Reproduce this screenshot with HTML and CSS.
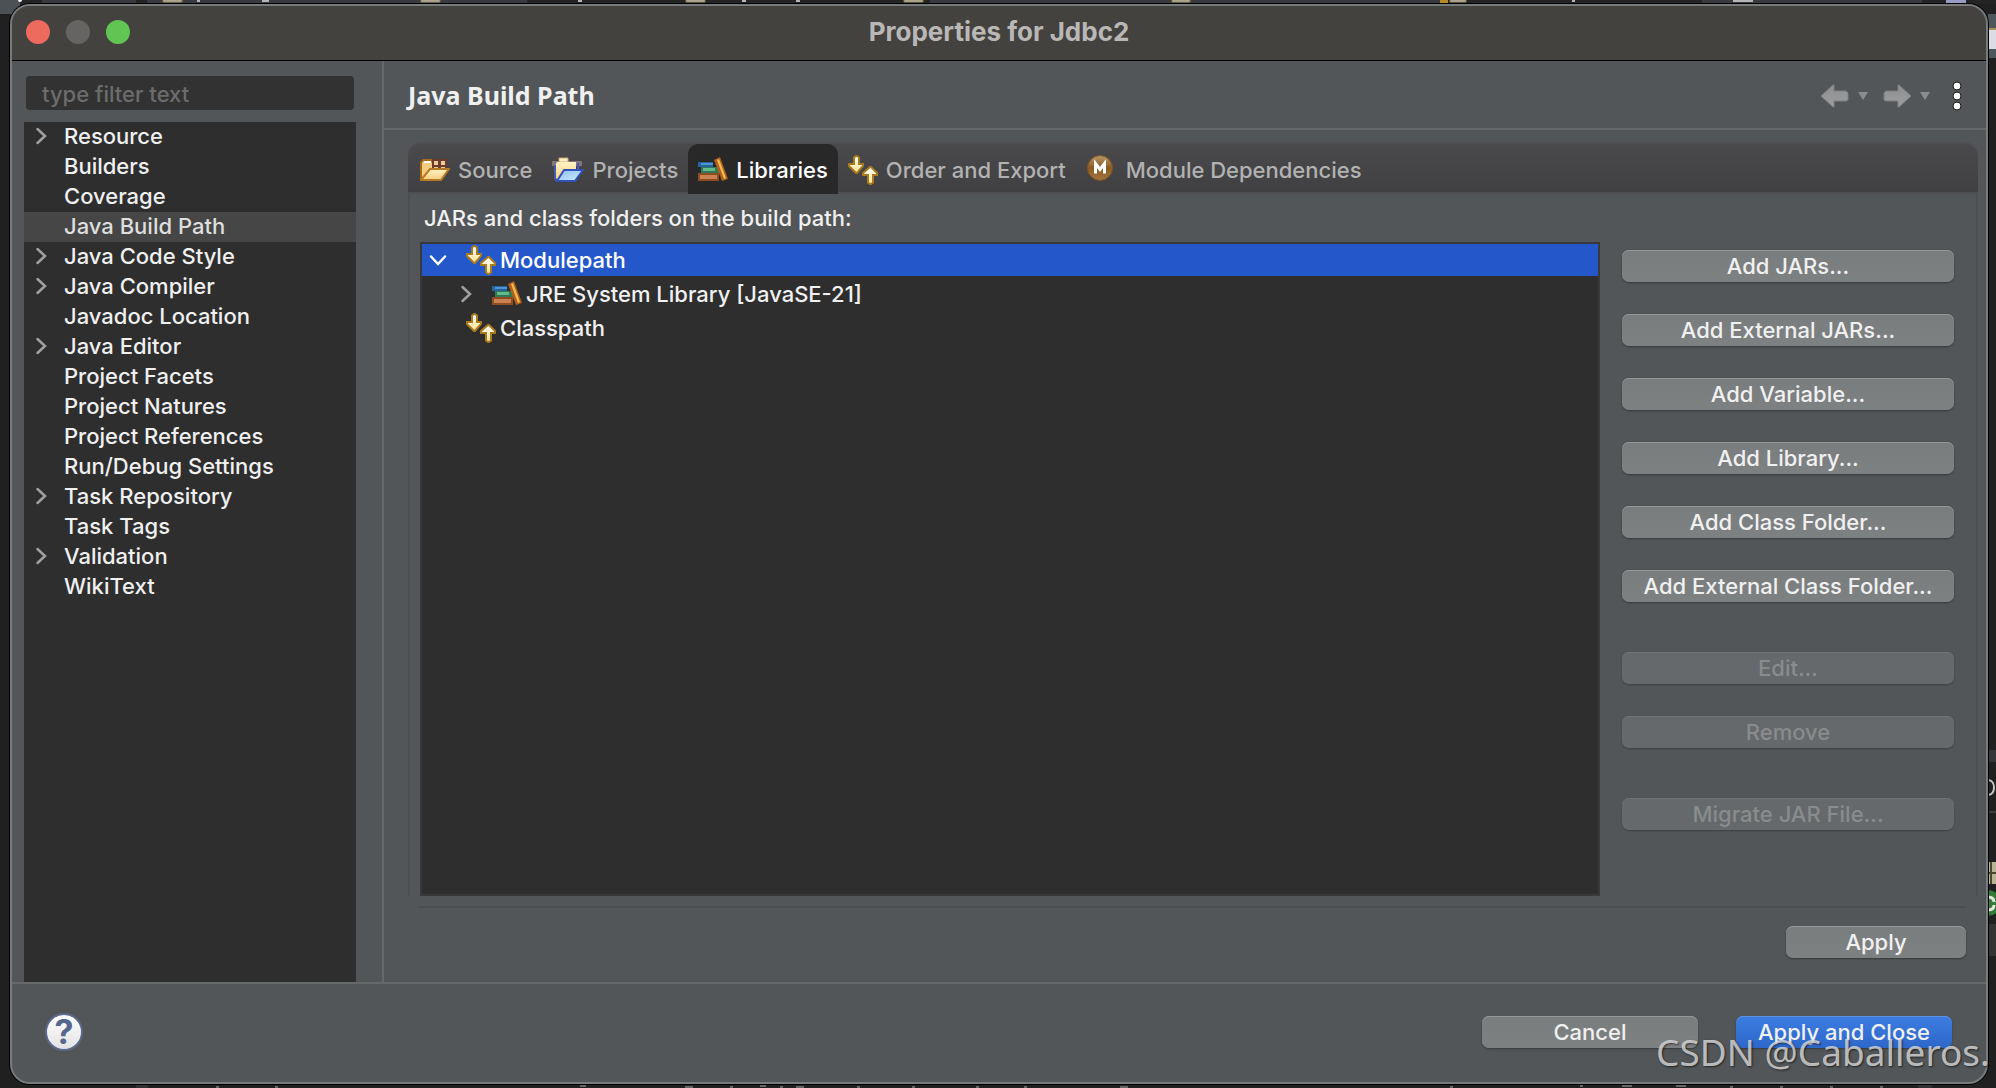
FILE: index.html
```html
<!DOCTYPE html>
<html lang="en">
<head>
<meta charset="utf-8">
<title>Properties for Jdbc2</title>
<link rel="stylesheet" href="styles.css">
</head>
<body>

<!-- shared icons -->
<svg class="defs" width="0" height="0" aria-hidden="true">
  <defs>
    <linearGradient id="gold" x1="0" y1="0" x2="0" y2="1">
      <stop offset="0" stop-color="#fff"/>
      <stop offset="1" stop-color="#fbe08c"/>
    </linearGradient>
    <linearGradient id="paper" x1="0" y1="0" x2="0" y2="1">
      <stop offset="0" stop-color="#fff3c4"/>
      <stop offset="1" stop-color="#f3cd7c"/>
    </linearGradient>
    <linearGradient id="sky" x1="0" y1="0" x2="1" y2="1">
      <stop offset="0" stop-color="#8fc0f5"/>
      <stop offset="1" stop-color="#cdeafd"/>
    </linearGradient>
    <linearGradient id="bronze" x1="0" y1="0" x2="0" y2="1">
      <stop offset="0" stop-color="#b9976b"/>
      <stop offset=".5" stop-color="#8a5a20"/>
      <stop offset="1" stop-color="#a37544"/>
    </linearGradient>
    <linearGradient id="grey" x1="0" y1="0" x2="0" y2="1">
      <stop offset="0" stop-color="#8c8e90"/>
      <stop offset="1" stop-color="#9c9ea0"/>
    </linearGradient>
    <symbol id="path" viewBox="0 0 30 30">
      <path d="M6 2.500 8 1h1l2 1.500V9h4v2L9 18H8L1 11V9h5z" fill="url(#gold)" stroke="#a87a20" stroke-width="2"/>
      <path d="M20 27.500 22 29h1l2-1.500V20h4v-2l-6-6h-1l-7 6v2h5z" fill="url(#gold)" stroke="#a87a20" stroke-width="2"/>
    </symbol>
    <symbol id="books" viewBox="0 0 30 26">
      <path d="M0 5h15v5H0z" fill="#28639f"/><path d="M3 6h12v2H3z" fill="#4a97d4"/>
      <path d="M3 10h18v6H3z" fill="#2e7a57"/><path d="M5 11h12v3H5z" fill="#65b98a"/>
      <path d="M0 16h21v8H0z" fill="#8f4c20"/><path d="M2 18h17v4H2z" fill="#cb8150"/>
      <path d="m16 3 6-3 8 22-6 2z" fill="#b45f1c"/><path d="m19 3 2-1 7 19-2 1z" fill="#f0bd4e"/>
    </symbol>
    <symbol id="source" viewBox="0 0 30 24">
      <path d="M1 22V5l2-3h8l2 3h8v8" fill="#f0cd83" stroke="#a8691c" stroke-width="2"/>
      <path d="M4 3h7v2H4z" fill="#fff"/>
      <path d="M12 1h15v13H12z" fill="#6b3a28"/>
      <path d="M14 3h4v4h-4zM21 3h4v4h-4zM14 9h4v4h-4zM21 9h4v4h-4z" fill="#e9cda0"/>
      <path d="M1 22 10 11h19l-8 11z" fill="url(#paper)" stroke="#b77a24" stroke-width="2"/>
    </symbol>
    <symbol id="projects" viewBox="0 0 32 26">
      <path d="M0 4h30v5H0z" fill="#84747b"/>
      <path d="M7 1h9v4H7z" fill="#fff1c6" stroke="#cfa763" stroke-width="1"/>
      <path d="M3 9v14l3 1L24 13V5H5z" fill="url(#paper)"/>
      <path d="M3 8v13l2 3M26 6v7" fill="none" stroke="#4659b4" stroke-width="2"/>
      <path d="M5 24 12 13h19l-8 11z" fill="url(#sky)" stroke="#3352bb" stroke-width="2"/>
    </symbol>
    <symbol id="module" viewBox="0 0 32 32">
      <circle cx="14" cy="14" r="12.500" fill="url(#bronze)" stroke="#7c5220" stroke-width="1"/>
      <path d="M9.500 19.500v-10l4.500 6 4.500-6v10" fill="none" stroke="#fff" stroke-width="3"/>
    </symbol>
    <symbol id="chevron" viewBox="0 0 12 18">
      <path d="m2.500 2 7.500 7-7.500 7" fill="none" stroke="currentColor" stroke-width="2.500" stroke-linecap="round"/>
    </symbol>
    <symbol id="arrow" viewBox="0 0 30 24">
      <path d="M1 12 13 1h1v6h12l2 2v7l-2 1H14v6h-1z" fill="url(#grey)" stroke="#7d8083" stroke-width="1"/>
    </symbol>
  </defs>
</svg>

<!-- what shows of the editor behind the dialog -->
<div class="behind" aria-hidden="true">
  <svg class="behind-top" width="100%" height="42">
    <path d="M0 0h20v14H0z" fill="#4b5154"/>
    <path d="M20 0h1976v4H20z" fill="#242424"/>
    <path d="M42 0h94v4H42zM147 0h380v4H147zM930 0h510v4H930zM1702 0h220v4h-220z" fill="#3a3b40"/>
    <path d="M163 0h19v2h-19zM421 0h19v2h-19zM686 0h19v2h-19zM904 0h19v2h-19zM1172 0h18v2h-18zM1450 0h16v2h-16z" fill="#c3cbdc" stroke="#8d7a41"/>
    <path d="M197 0h3v2h-3zM262 0h7v2h-7zM578 0h4v2h-4zM742 0h4v2h-4zM796 0h4v2h-4zM1572 0h3v2h-3zM1733 0h20v2h-20z" fill="#b5b5b5"/>
    <path d="M1440 0h8v3h-8z" fill="#b78927"/>
    <path d="M1946 0h20v3h-20z" fill="#9a9bc4"/>
    <circle cx="20" cy="0" r="2" fill="#fff"/>
  </svg>
  <svg class="behind-right" width="8" height="960">
    <path d="M0 14h8v44H0z" fill="#50575a"/>
    <path d="M1 30h7v19H1z" fill="#dcdde3"/><path d="M1 28h7v2H1z" fill="#a58f5d"/>
    <path d="M0 750h8v12H0z" fill="#34363a"/><path d="M0 811h8v2H0z" fill="#3b3b3b"/>
    <path d="M0 780c8 0 8 15 0 15" fill="none" stroke="#c6c6c6" stroke-width="2"/>
    <path d="M0 862h8v22H0z" fill="#b6b494"/><path d="M3 862v22M0 873h8" stroke="#48472f" stroke-width="2"/>
    <circle cx="0" cy="903" r="13" fill="#347a3a"/><path d="M0 897q6 0 6 5M0 910q6 0 6-5" fill="none" stroke="#dfe8df" stroke-width="3"/>
    <path d="M0 924h8v32H0z" fill="#343434"/>
  </svg>
  <svg class="behind-bottom" width="100%" height="4">
    <path d="M136 0h12v4h-12zM1918 0h14v4h-14z" fill="#303235"/>
    <path d="M580 2h6M760 2h6M216 3h3M275 3h3M685 3h8M730 3h3M780 3h3M796 3h8M857 3h3M912 3h3M976 3h3M1024 3h3M1120 3h8M1450 3h3M1580 2h3M1622 2h10M1676 2h10M1730 3h3M1780 3h3M1830 3h3M1880 3h3" stroke="#666" stroke-width="2"/>
  </svg>
</div>

<div class="dialog" role="dialog" aria-labelledby="dialog-title">
  <div class="titlebar">
    <div class="lights">
      <button class="light close" aria-label="Close"></button>
      <button class="light minimize" aria-label="Minimize" disabled></button>
      <button class="light zoom" aria-label="Zoom"></button>
    </div>
    <h1 id="dialog-title">Properties for Jdbc2</h1>
  </div>

  <div class="content">
    <div class="sidebar">
      <input class="filter" type="text" placeholder="type filter text" aria-label="type filter text">
      <ul class="pages">
        <li><svg class="chev"><use href="#chevron"/></svg><a href="#">Resource</a></li>
        <li><a href="#">Builders</a></li>
        <li><a href="#">Coverage</a></li>
        <li class="current"><a href="#">Java Build Path</a></li>
        <li><svg class="chev"><use href="#chevron"/></svg><a href="#">Java Code Style</a></li>
        <li><svg class="chev"><use href="#chevron"/></svg><a href="#">Java Compiler</a></li>
        <li><a href="#">Javadoc Location</a></li>
        <li><svg class="chev"><use href="#chevron"/></svg><a href="#">Java Editor</a></li>
        <li><a href="#">Project Facets</a></li>
        <li><a href="#">Project Natures</a></li>
        <li><a href="#">Project References</a></li>
        <li><a href="#">Run/Debug Settings</a></li>
        <li><svg class="chev"><use href="#chevron"/></svg><a href="#">Task Repository</a></li>
        <li><a href="#">Task Tags</a></li>
        <li><svg class="chev"><use href="#chevron"/></svg><a href="#">Validation</a></li>
        <li><a href="#">WikiText</a></li>
      </ul>
    </div>

    <div class="main">
      <div class="page-header">
        <h2>Java Build Path</h2>
        <div class="history">
          <button aria-label="Back" disabled><svg width="30" height="24"><use href="#arrow"/></svg></button>
          <button aria-label="Back history" disabled><svg width="10" height="8"><path d="M0 0h10L5 8z" fill="#8a8d8f"/></svg></button>
          <button class="forward" aria-label="Forward" disabled><svg width="30" height="24"><use href="#arrow"/></svg></button>
          <button aria-label="Forward history" disabled><svg width="10" height="8"><path d="M0 0h10L5 8z" fill="#8a8d8f"/></svg></button>
          <button class="more" aria-label="Menu"><svg width="10" height="30" fill="#fff" stroke="#151515"><circle cx="5" cy="5" r="4"/><circle cx="5" cy="15" r="4"/><circle cx="5" cy="25" r="4"/></svg></button>
        </div>
      </div>

      <div class="folder">
        <div class="tabs" role="tablist">
          <button role="tab"><svg width="30" height="24"><use href="#source"/></svg>Source</button>
          <button role="tab"><svg width="32" height="26"><use href="#projects"/></svg>Projects</button>
          <button role="tab" class="active" aria-selected="true"><svg width="30" height="26"><use href="#books"/></svg>Libraries</button>
          <button role="tab"><svg width="30" height="30"><use href="#path"/></svg>Order and Export</button>
          <button role="tab"><svg width="32" height="32"><use href="#module"/></svg>Module Dependencies</button>
        </div>
        <div class="panel">
          <p class="caption">JARs and class folders on the build path:</p>
          <div class="columns">
            <ul class="entries">
              <li class="selected"><svg class="chev open"><use href="#chevron"/></svg><svg width="30" height="30"><use href="#path"/></svg>Modulepath</li>
              <li class="child"><svg class="chev"><use href="#chevron"/></svg><svg width="30" height="26"><use href="#books"/></svg>JRE System Library [JavaSE-21]</li>
              <li class="leaf"><svg width="30" height="30"><use href="#path"/></svg>Classpath</li>
            </ul>
            <div class="actions">
              <button class="btn">Add JARs...</button>
              <button class="btn">Add External JARs...</button>
              <button class="btn">Add Variable...</button>
              <button class="btn">Add Library...</button>
              <button class="btn">Add Class Folder...</button>
              <button class="btn">Add External Class Folder...</button>
              <button class="btn group" disabled>Edit...</button>
              <button class="btn" disabled>Remove</button>
              <button class="btn group" disabled>Migrate JAR File...</button>
            </div>
          </div>
        </div>
      </div>

      <div class="apply-row">
        <button class="btn">Apply</button>
      </div>
    </div>
  </div>

  <div class="footer">
    <button class="help" aria-label="Help">?</button>
    <button class="btn">Cancel</button>
    <button class="btn primary">Apply and Close</button>
  </div>
</div>

<div class="watermark">CSDN @Caballeros.</div>

</body>
</html>
```
FILE: styles.css
```css
* {
  box-sizing: border-box;
}

body {
  display: flex;
  min-height: 100vh;
  margin: 0;
  padding: 4px 8px 4px 10px;
  background: #202020;
  color: #f0f0f0;
  font-family: Inter, "Liberation Sans", sans-serif;
  font-size: 22px;
  font-weight: 450;
  line-height: 30px;
}

button {
  padding: 0;
  border: 0;
  background: none;
  color: inherit;
  font: inherit;
}

ul {
  margin: 0;
  padding: 0;
  list-style: none;
}

a {
  color: inherit;
  text-decoration: none;
}

.defs,
.behind svg {
  position: absolute;
}
.behind-top {
  top: 0;
  left: 0;
}
.behind-right {
  top: 0;
  right: 0;
}
.behind-bottom {
  bottom: 0;
  left: 0;
}

/* window */
.dialog {
  position: relative;
  display: flex;
  flex: 1;
  flex-direction: column;
  overflow: hidden;
  border: 2px solid #777b7c;
  border-radius: 20px;
  background: #525658;
  box-shadow: 0 0 0 1px #000;
}

.titlebar {
  display: grid;
  grid-template-columns: 1fr auto 1fr;
  align-items: center;
  height: 55px;
  padding: 0 14px 2px;
  border-bottom: 1px solid #000;
  background: #44423f;
}
.titlebar h1 {
  margin: 0;
  color: #b9b8b6;
  font-size: 26px;
  font-weight: 700;
}
.lights {
  display: flex;
  gap: 16px;
}
.light {
  width: 24px;
  height: 24px;
  border-radius: 50%;
}
.close { background: #ed6a5e; }
.minimize { background: #666462; }
.zoom { background: #61c554; }

.content {
  display: flex;
  flex: 1;
}

/* page list */
.sidebar {
  display: flex;
  flex: 0 0 372px;
  flex-direction: column;
  gap: 12px;
  min-width: 0;
  padding: 15px 26px 0 12px;
  border-right: 2px solid #65696a;
}
.filter {
  height: 34px;
  min-width: 0;
  margin: 0 2px;
  padding: 2px 16px 0;
  border: 0;
  border-radius: 4px;
  background: #323232;
  color: #f0f0f0;
  font: inherit;
}
.filter::placeholder {
  color: #6c6c6c;
}
.pages {
  flex: 1;
  background: #2e2e2e;
}
.pages li {
  display: flex;
  align-items: center;
  height: 30px;
  padding: 0 0 2px 40px;
}
.pages .chev {
  margin: 0 17px 0 -29px;
}
.pages .current {
  background: #464646;
  color: #dedede;
}
.chev {
  width: 12px;
  height: 18px;
  color: #a0a0a0;
}

/* page */
.main {
  display: flex;
  flex: 1;
  flex-direction: column;
  min-width: 0;
}
.page-header {
  display: flex;
  align-items: center;
  justify-content: space-between;
  height: 69px;
  padding: 0 24px;
  border-bottom: 2px solid #65696a;
}
.page-header h2 {
  margin: 0;
  font-family: "Noto Sans", "Open Sans", sans-serif;
  font-size: 25px;
  font-weight: 700;
}
.history {
  display: flex;
  align-items: center;
  gap: 8px;
  padding-top: 2px;
}
.history button,
.history svg {
  display: block;
}
.history .forward {
  margin-left: 6px;
  transform: scaleX(-1);
}
.history .more {
  margin-left: 14px;
}

.folder {
  display: flex;
  flex: 1;
  flex-direction: column;
  margin: 12px 8px 0 24px;
}
.tabs {
  display: flex;
  height: 52px;
  padding-left: 2px;
  border: 2px solid #4f4f52;
  border-width: 2px 0;
  border-radius: 14px 14px 0 0;
  background: linear-gradient(#4a4a4c, #403f41);
  color: #b2b2b2;
}
.tabs button {
  display: flex;
  align-items: center;
  gap: 8px;
  padding: 4px 10px 0;
}
.tabs .active {
  margin-bottom: -2px;
  padding-bottom: 2px;
  border-radius: 10px 10px 0 0;
  background: #282828;
  color: #fff;
}
.panel {
  display: flex;
  flex: 1;
  flex-direction: column;
  padding: 0 22px 0 10px;
  border: 2px solid #4d4d51;
  border-width: 0 2px;
}
.caption {
  margin: 9px 4px;
}
.columns {
  display: flex;
  flex: 1;
  gap: 22px;
}
.entries {
  flex: 1;
  border: 2px solid #39393b;
  background: #2e2e2e;
}
.entries li {
  display: flex;
  align-items: center;
  height: 32px;
  margin-bottom: 2px;
  padding-left: 10px;
}
.entries li svg:last-of-type {
  margin-right: 4px;
}
.entries .chev {
  margin-right: 22px;
}
.entries .open {
  color: #fff;
  transform: rotate(90deg);
}
.entries .selected {
  background: #2458ca;
  color: #fff;
}
.entries .child {
  padding-left: 38px;
}
.entries .child .chev {
  margin-right: 20px;
}
.entries .leaf {
  padding-left: 44px;
}

/* buttons */
.btn {
  height: 32px;
  border-radius: 7px;
  background: linear-gradient(#7a7d7e, #7e8182);
  box-shadow: inset 0 1px 0 #969899, 0 1px 2px rgba(0, 0, 0, .35);
}
.btn:disabled {
  background: #65696b;
  box-shadow: inset 0 1px 0 #717476, 0 1px 2px rgba(0, 0, 0, .25);
  color: #898c8d;
}
.btn.primary {
  background: linear-gradient(#3c7de2, #2e67c9);
  box-shadow: inset 0 1px 0 #5c92e6, 0 1px 2px rgba(0, 0, 0, .35);
}
.actions {
  display: flex;
  flex: 0 0 332px;
  flex-direction: column;
  gap: 32px;
  padding-top: 8px;
}
.actions .group {
  margin-top: 18px;
}
.apply-row {
  display: flex;
  justify-content: flex-end;
  margin: 10px 20px 24px 34px;
  padding-top: 18px;
  border-top: 2px solid #4d4d51;
}
.apply-row .btn {
  width: 180px;
}

.footer {
  display: flex;
  align-items: center;
  gap: 38px;
  height: 100px;
  padding: 0 34px 2px 33px;
  border-top: 2px solid #65696a;
}
.footer .btn {
  width: 216px;
}
.help {
  width: 38px;
  height: 38px;
  margin-right: auto;
  border: 2px solid #5a6a8c;
  border-radius: 50%;
  background: linear-gradient(#fff, #e2e2e4);
  color: #56678c;
  font-size: 34px;
  font-weight: 700;
  line-height: 34px;
}

.watermark {
  position: absolute;
  right: 6px;
  bottom: 12px;
  color: rgba(225, 225, 225, .8);
  font-family: "Noto Sans", sans-serif;
  font-size: 37px;
  font-weight: 400;
  line-height: 48px;
  text-shadow: 1px 1px 2px rgba(0, 0, 0, .6);
  pointer-events: none;
}
```
